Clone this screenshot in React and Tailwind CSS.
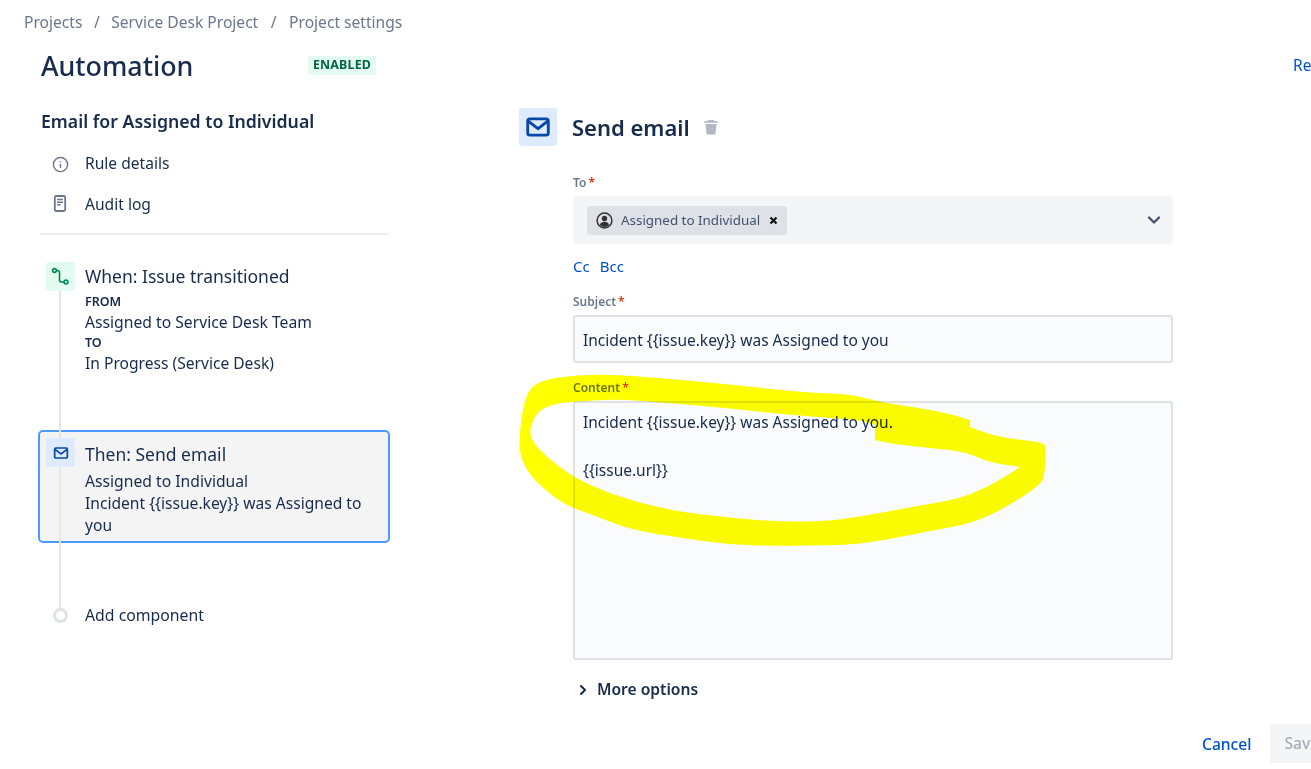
import React from "react";
import { ChevronDown, ChevronRight, Info } from "lucide-react";

// outline of the yellow marker scribble, clockwise from the top left
const markerPoints = [
  [715, 383], [648, 377], [598, 374], [558, 377], [535, 383], [525, 397], [520, 427], [519, 453], [528, 473], [545, 490],
  [565, 505], [598, 517], [632, 530], [682, 538], [732, 545], [780, 546], [847, 545], [880, 541], [930, 531], [973, 523],
  [1007, 507], [1040, 485], [1045, 475], [1045, 445], [1045, 445], [1040, 442], [997, 437], [970, 427], [970, 427], [970, 420], [970, 420],
  [947, 413], [913, 407], [880, 402], [850, 394], [813, 393], [782, 390],
];
const markerHole = [
  [875, 425], [875, 425], [875, 440], [875, 440], [893, 444], [930, 448], [967, 452], [987, 462], [1020, 467], [1020, 467],
  [997, 482], [963, 498], [923, 505], [880, 513], [833, 521], [782, 522], [732, 518], [682, 512], [648, 505], [608, 493],
  [573, 477], [548, 458], [533, 443], [529, 430], [538, 410], [558, 403], [573, 402], [615, 399], [655, 402], [715, 407],
  [782, 414], [830, 418], [860, 420],
];

// closed curve through the midpoints; a doubled point stays a sharp corner
const toPath = (pts) => {
  const mid = (a, b) => [(a[0] + b[0]) / 2, (a[1] + b[1]) / 2];
  let d = "M" + mid(pts[pts.length - 1], pts[0]).join(" ");
  pts.forEach((p, i) => {
    d += "Q" + p.join(" ") + " " + mid(p, pts[(i + 1) % pts.length]).join(" ");
  });
  return d + "Z";
};

function MailIcon({ size = 16 }) {
  return (
    <svg width={size} height={size} viewBox="0 0 24 24" fill="none">
      <rect x="2.5" y="4.5" width="19" height="15" rx="2" stroke="#0747a6" strokeWidth="2.6" />
      <path d="M3 6.5l9 7 9-7" stroke="#0747a6" strokeWidth="2.6" fill="none" />
    </svg>
  );
}

function Label({ text, className = "" }) {
  return (
    <div className={"text-[12px] leading-4 font-semibold text-[#6b778c] " + className}>
      {text}
      <span className="text-[#de350b] ml-0.5">*</span>
    </div>
  );
}

export default function App() {
  return (
    <div
      className="relative w-[1311px] h-[769px] overflow-hidden bg-white text-[#172b4d]"
      style={{ fontFamily: '"Noto Sans", sans-serif' }}
    >
      {/* breadcrumbs */}
      <div className="flex items-center h-6 pt-[11px] box-content ml-6 text-[15.6px] text-[#6b778c]">
        <span>Projects</span>
        <span className="mx-[11.5px]">/</span>
        <span>Service Desk Project</span>
        <span className="mx-[12.5px]">/</span>
        <span>Project settings</span>
      </div>

      {/* title row */}
      <div className="flex items-center h-10 mt-[11px] ml-[41px] w-[1300px]">
        <h1 className="w-[267px] text-[26.8px] font-medium leading-10">Automation</h1>
        <span className="w-[68px] h-[19px] mb-[2px] flex items-center justify-center rounded-[3px] bg-[#e3fcef] text-[#006644] text-[12.4px] font-bold tracking-[0.2px]">
          ENABLED
        </span>
        <span className="ml-[917px] text-[15.5px] text-[#0052cc]">Re</span>
      </div>

      <div className="flex">
        {/* left column */}
        <div className="w-[348px] ml-10 shrink-0">
          <h2 className="mt-[23px] pl-px text-[17.7px] leading-6 font-semibold">Email for Assigned to Individual</h2>
          <div className="flex items-center h-6 mt-[19px] text-[15.6px]">
            <span className="w-[45px] pl-3 text-[#6b778c]">
              <Info size={17} strokeWidth={2} />
            </span>
            Rule details
          </div>
          <div className="flex items-center h-6 mt-[17px] text-[15.6px]">
            <span className="w-[45px] pl-[13px] -mt-[3px]">
              <svg width="14" height="17" viewBox="0 0 14 17" fill="none">
                <rect x="1.8" y="1" width="10.4" height="15" rx="1.5" stroke="#6b778c" strokeWidth="1.8" />
                <path d="M4 4.5h6M4 7.2h6M4 9.8h3.5" stroke="#6b778c" strokeWidth="1.4" />
              </svg>
            </span>
            Audit log
          </div>
          <div className="h-0.5 bg-[#ebecf0] mt-[16px]"></div>

          {/* rule timeline */}
          <div className="relative mt-[27px]">
            <div className="absolute left-[19px] top-[20px] h-[327px] w-0.5 bg-[#e6e7ec] z-10"></div>

            <div className="relative pl-[45px] h-[168px]">
              <span className="absolute z-20 left-[6px] top-0 w-[29px] h-[29px] rounded-[3px] bg-[#e3fcef]">
                <svg width="29" height="29" viewBox="0 0 29 29" fill="none">
                  <path d="M8.500 8.500h3q2 0 2 2v7.500q0 2 2 2h4.500" stroke="#00875a" strokeWidth="1.600" />
                  <circle cx="8.500" cy="8.500" r="1.900" fill="#e3fcef" stroke="#00875a" strokeWidth="1.600" />
                  <circle cx="20" cy="20" r="1.900" fill="#e3fcef" stroke="#00875a" strokeWidth="1.600" />
                </svg>
              </span>
              <div className="text-[17.5px] leading-6 pt-[2px]">When: Issue transitioned</div>
              <div className="text-[12.5px] leading-4 font-semibold mt-[6px]">FROM</div>
              <div className="text-[15.7px] leading-6">Assigned to Service Desk Team</div>
              <div className="text-[12.5px] leading-4 font-semibold mt-[1px]">TO</div>
              <div className="text-[15.6px] leading-6">In Progress (Service Desk)</div>
            </div>

            <div className="relative -ml-0.5 w-[352px] h-[113px] rounded-[5px] border-2 border-[#4c9aff] bg-[#f4f4f4] pl-[45px]">
              <span className="absolute z-20 left-[6px] top-[6px] w-[29px] h-[29px] rounded-[3px] bg-[#deebff] flex items-center justify-center">
                <MailIcon size={16} />
              </span>
              <div className="text-[17.5px] leading-6 pt-[10px]">Then: Send email</div>
              <div className="text-[15.7px] leading-[22px] mt-[4px]">Assigned to Individual</div>
              <div className="text-[15.6px] leading-[22px]">
                {"Incident {{issue.key}} was Assigned to you"}
              </div>
            </div>

            <div className="relative flex items-center pl-[45px] h-6 mt-[61px] text-[15.8px]">
              <span className="absolute z-20 left-[13px] top-[4px] w-[15px] h-[15px] rounded-full border-[3px] border-[#dfe1e6] bg-white"></span>
              Add component
            </div>
          </div>
        </div>

        {/* right column */}
        <div className="ml-[131px] w-[654px] shrink-0">
          <div className="flex items-center mt-[22px] h-[38px]">
            <span className="w-[38px] h-[38px] rounded-[3px] bg-[#deebff] flex items-center justify-center">
              <MailIcon size={26} />
            </span>
            <h2 className="ml-[15px] text-[22px] font-semibold leading-8">Send email</h2>
            <svg className="ml-[13px] -mt-[1px]" width="16" height="16" viewBox="0 0 16 16">
              <path d="M1 3.2c0-.7 1.5-1.2 4-1.4L5.600 1h4.800l.6.800c2.500.2 4 .7 4 1.400v.6H1z" fill="#b3b9c4" />
              <path d="M2.500 5h11l-1 9.500c-.1.600-.6 1-1.200 1H4.700c-.6 0-1.100-.4-1.200-1z" fill="#b3b9c4" />
            </svg>
          </div>

          <div className="ml-[54px] w-[600px]">
            <Label text="To" className="mt-[29px]" />
            <div className="flex items-center justify-between h-12 mt-[5px] rounded-[3px] bg-[#f4f5f7] pl-3.5 pr-[9px]">
              <span className="flex items-center h-[29px] w-[200px] rounded-[3px] bg-[#dfe1e6] pl-[9px] text-[13.4px] text-[#42526e]">
                <svg width="17" height="17" viewBox="0 0 17 17" className="mr-[8px] shrink-0">
                  <circle cx="8.500" cy="8.500" r="7.400" fill="none" stroke="#333" strokeWidth="1.500" />
                  <circle cx="8.500" cy="6.500" r="2.700" fill="#333" />
                  <path d="M3.800 13c.6-2.300 2.500-3.200 4.700-3.200s4.100.9 4.700 3.200c-1.200 1.200-2.900 2-4.700 2s-3.500-.8-4.700-2z" fill="#333" />
                </svg>
                Assigned to Individual
                <svg width="9" height="9" viewBox="0 0 9 9" className="ml-[9px] shrink-0">
                  <path d="M1.500 1.500l6 6M7.500 1.500l-6 6" stroke="#111" strokeWidth="2.200" />
                </svg>
              </span>
              <ChevronDown size={20} strokeWidth={2.8} className="text-[#42526e]" />
            </div>
            <div className="flex gap-[10px] mt-[12px] text-[15px] leading-5 text-[#0052cc]">
              <span>Cc</span>
              <span>Bcc</span>
            </div>

            <Label text="Subject" className="mt-[18px]" />
            <div className="flex items-center h-12 mt-[5px] rounded-[3px] border-2 border-[#dfe1e6] bg-[#fafbfc] px-2 pt-[4px] text-[15.5px]">
              {"Incident {{issue.key}} was Assigned to you"}
            </div>

            <Label text="Content" className="mt-[17px]" />
            <div className="h-[259px] mt-[5px] rounded-[3px] border-2 border-[#dfe1e6] bg-[#fafbfc] px-2 pt-[7px] text-[15.5px] leading-6">
              <div>{"Incident {{issue.key}} was Assigned to you."}</div>
              <div className="h-6"></div>
              <div>{"{{issue.url}}"}</div>
            </div>

            <div className="flex items-center h-6 mt-[18px] text-[15.6px] font-semibold">
              <ChevronRight size={16} strokeWidth={3} className="mr-[6px] ml-0.5" />
              More options
            </div>
          </div>

          <div className="flex items-center ml-[683px] w-[200px] mt-[22px]">
            <span className="pt-[3px] text-[15.6px] font-medium text-[#0052cc]">Cancel</span>
            <span className="ml-[19px] flex items-center h-[39px] w-[70px] pl-[14px] pt-[1px] rounded-[3px] bg-[#f4f5f7] text-[15.6px] font-medium text-[#a5adba]">
              Save
            </span>
          </div>
        </div>
      </div>

      {/* yellow marker scribbled over the screenshot */}
      <svg className="absolute inset-0 mix-blend-multiply pointer-events-none z-30" width="1311" height="769">
        <path d={toPath(markerPoints) + toPath(markerHole)} fill="#ffff00" fillRule="evenodd" />
      </svg>
    </div>
  );
}
